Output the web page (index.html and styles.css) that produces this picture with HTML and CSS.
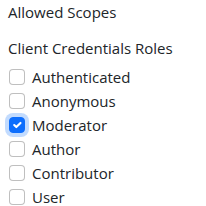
FILE: index.html
```html
<!DOCTYPE html>
<html lang="en">
<head>
    <meta charset="UTF-8">
    <title>Client Roles</title>
    <link rel="stylesheet" href="styles.css">
</head>
<body>
    <div class="section">
        <label class="section-label">Allowed Scopes</label>
    </div>
    <div class="section">
        <label class="section-label roles-label">Client Credentials Roles</label>
        <div class="form-check">
            <input class="form-check-input" type="checkbox" id="role1">
            <label class="form-check-label" for="role1">Authenticated</label>
        </div>
        <div class="form-check">
            <input class="form-check-input" type="checkbox" id="role2">
            <label class="form-check-label" for="role2">Anonymous</label>
        </div>
        <div class="form-check">
            <input class="form-check-input" type="checkbox" id="role3" checked>
            <label class="form-check-label" for="role3">Moderator</label>
        </div>
        <div class="form-check">
            <input class="form-check-input" type="checkbox" id="role4">
            <label class="form-check-label" for="role4">Author</label>
        </div>
        <div class="form-check">
            <input class="form-check-input" type="checkbox" id="role5">
            <label class="form-check-label" for="role5">Contributor</label>
        </div>
        <div class="form-check">
            <input class="form-check-input" type="checkbox" id="role6">
            <label class="form-check-label" for="role6">User</label>
        </div>
    </div>
</body>
</html>
```
FILE: styles.css
```css
body {
    font-family: "Open Sans", sans-serif;
    font-size: 15px;
    line-height: 24px;
    color: #212529;
    background-color: #fff;
    margin: 0;
    padding: 0 8px;
}

.section-label {
    display: inline-block;
    margin-bottom: 12px;
}

.roles-label {
    margin-bottom: 5px;
}

.form-check {
    display: block;
    min-height: 24px;
    padding-left: 24px;
}

.form-check-input {
    float: left;
    width: 16px;
    height: 16px;
    margin: 4px 0 0 -23px;
    appearance: none;
    background-color: #fff;
    border: 1px solid rgba(0, 0, 0, 0.25);
    border-radius: 4px;
    vertical-align: top;
}

.form-check-input:checked {
    background-color: #0d6efd;
    border-color: #0d6efd;
    box-shadow: 0 0 0 4px rgba(13, 110, 253, 0.25);
    background-image: url("data:image/svg+xml,%3csvg xmlns='http://www.w3.org/2000/svg' viewBox='0 0 20 20'%3e%3cpath fill='none' stroke='%23fff' stroke-linecap='round' stroke-linejoin='round' stroke-width='3' d='M6 10l3 3l6-6'/%3e%3c/svg%3e");
    background-size: 100% 100%;
}
```
